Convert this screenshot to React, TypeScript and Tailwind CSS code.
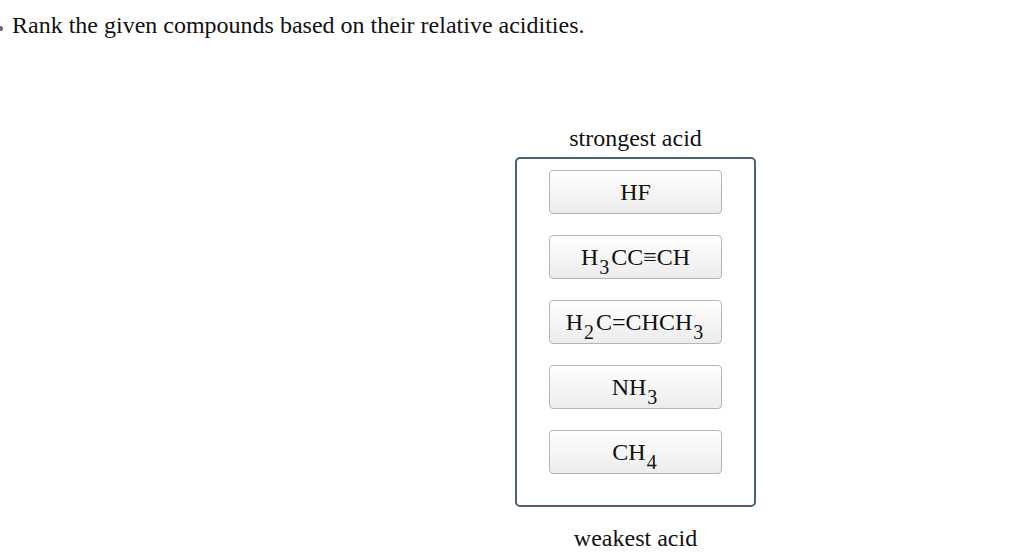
import React from "react";

type Part = { t: string; sub?: boolean };

// compounds listed strongest to weakest
const compounds: Part[][] = [
  [{ t: "HF" }],
  [{ t: "H" }, { t: "3", sub: true }, { t: "CC≡CH" }],
  [{ t: "H" }, { t: "2", sub: true }, { t: "C=CHCH" }, { t: "3", sub: true }],
  [{ t: "NH" }, { t: "3", sub: true }],
  [{ t: "CH" }, { t: "4", sub: true }],
];

const Formula = ({ parts }: { parts: Part[] }) => (
  <span>
    {parts.map((p, i) =>
      p.sub ? (
        <span key={i} className="relative top-[9px] text-[20px] pl-[1px] pr-[2px]">
          {p.t}
        </span>
      ) : (
        <span key={i}>{p.t}</span>
      )
    )}
  </span>
);

export default function App() {
  return (
    <div className="w-[1036px] h-[560px] bg-white text-[#111] font-['Liberation_Serif',serif] text-[24px] leading-[28px]">
      <div className="flex pt-[11px]">
        <span className="w-[3px] h-[5px] mt-[15px] bg-[#666] rounded-r-full" />
        <span className="ml-[9px]">Rank the given compounds based on their relative acidities.</span>
      </div>

      <div className="ml-[515px] mt-[85px] w-[241px] flex flex-col items-center">
        <div>strongest acid</div>
        <div className="mt-[5px] w-[241px] h-[350px] border-2 border-[#4d6175] rounded-[5px] pt-[11px] flex flex-col items-center gap-[21px]">
          {compounds.map((c, i) => (
            <div
              key={i}
              className="w-[173px] h-[44px] border border-[#b5b5b5] rounded-[4px] bg-gradient-to-b from-white to-[#ececec] flex items-center justify-center"
            >
              <Formula parts={c} />
            </div>
          ))}
        </div>
        <div className="mt-[17px]">weakest acid</div>
      </div>
    </div>
  );
}
